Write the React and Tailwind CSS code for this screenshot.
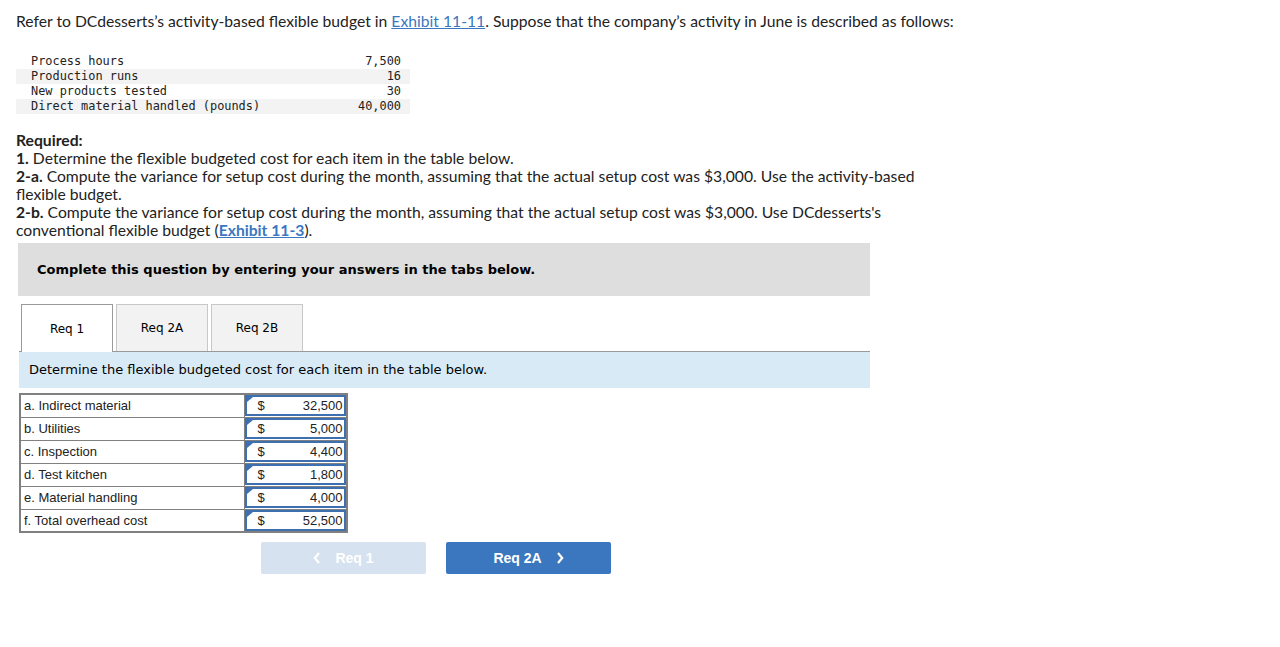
const activity = [
  ["Process hours", "7,500"],
  ["Production runs", "16"],
  ["New products tested", "30"],
  ["Direct material handled (pounds)", "40,000"],
];

const costs = [
  ["a. Indirect material", "32,500"],
  ["b. Utilities", "5,000"],
  ["c. Inspection", "4,400"],
  ["d. Test kitchen", "1,800"],
  ["e. Material handling", "4,000"],
  ["f. Total overhead cost", "52,500"],
];

const sans = "font-['Lato','Open_Sans',sans-serif]";
const verdana = "font-['DejaVu_Sans',Verdana,sans-serif]";
const arial = "font-['Liberation_Sans',Arial,sans-serif]";

export default function App() {
  return (
    <main className={`min-h-screen bg-white px-4 pt-[11px] text-[#222] ${sans}`}>
      <p className="text-[15.7px] leading-[20px]">
        Refer to DCdesserts’s activity-based flexible budget in{" "}
        <a href="#" className="text-[#3a77bf] underline">Exhibit 11-11</a>. Suppose that the company’s activity in June is
        described as follows:
      </p>

      <table className="mt-[23px] w-[394px] font-['DejaVu_Sans_Mono',monospace] text-[11.9px] leading-[15px] text-[#222]">
        <tbody>
          {activity.map(([label, value], i) => (
            <tr key={label} className={i % 2 === 1 ? "bg-[#f3f3f3]" : ""}>
              <td className="pl-[15px]">{label}</td>
              <td className="pr-[9px] text-right">{value}</td>
            </tr>
          ))}
        </tbody>
      </table>

      <div className="mt-[17px] text-[15.7px] leading-[18px]">
        <p className="font-bold">Required:</p>
        <p>
          <b>1.</b> Determine the flexible budgeted cost for each item in the table below.
        </p>
        <p className="w-[930px]">
          <b>2-a.</b> Compute the variance for setup cost during the month, assuming that the actual setup cost was
          $3,000. Use the activity-based flexible budget.
        </p>
        <p className="w-[900px]">
          <b>2-b.</b> Compute the variance for setup cost during the month, assuming that the actual setup cost was
          $3,000. Use DCdesserts's conventional flexible budget (
          <a href="#" className="font-bold text-[#3a77bf] underline">Exhibit 11-3</a>).
        </p>
      </div>

      <div className={`ml-[2px] mt-[4px] flex h-[53px] w-[852px] items-center bg-[#dedede] pl-[19px] text-[13px] font-bold text-black ${verdana}`}>
        Complete this question by entering your answers in the tabs below.
      </div>

      <div className={`ml-[3px] mt-[8px] w-[851px] ${verdana}`}>
        <div className="flex gap-[3px] pl-[2px]">
          <div className="relative z-10 -mb-px flex h-[48px] w-[92px] items-center justify-center border border-b-0 border-[#9a9a9a] bg-white text-[12px] text-black">
            Req 1
          </div>
          <div className="flex h-[47px] w-[92px] items-center justify-center border border-b-0 border-[#c8c8c8] bg-[#f2f2f2] text-[12px] text-black">
            Req 2A
          </div>
          <div className="flex h-[47px] w-[92px] items-center justify-center border border-b-0 border-[#c8c8c8] bg-[#f2f2f2] text-[12px] text-black">
            Req 2B
          </div>
        </div>
        <div className="flex h-[37px] items-center border-t border-[#9a9a9a] bg-[#d9eaf7] pl-[10px] text-[13px] text-black">
          Determine the flexible budgeted cost for each item in the table below.
        </div>

        <table className={`mt-[5px] border-collapse border-2 border-[#808080] text-[13px] text-[#222] ${arial}`}>
          <tbody>
            {costs.map(([label, value]) => (
              <tr key={label} className="h-[23px]">
                <td className="w-[224px] border border-[#808080] pl-[3px]">{label}</td>
                <td className="border border-[#808080] p-0">
                  <div className="relative flex h-[21px] w-[101px] items-center border-2 border-[#3e6fb0] pr-[1px]">
                    <span className="absolute left-0 top-0 h-0 w-0 border-l-[6px] border-b-[5px] border-l-[#3e6fb0] border-b-transparent" />
                    <span className="pl-[11px]">$</span>
                    <span className="ml-auto">{value}</span>
                  </div>
                </td>
              </tr>
            ))}
          </tbody>
        </table>

        <div className={`ml-[242px] mt-[9px] flex gap-[20px] text-[14px] font-bold ${arial}`}>
          <button type="button" className="flex h-[32px] w-[165px] items-center justify-center gap-[14px] rounded-[2px] bg-[#d6e2f0] text-white">
            <svg width="8" height="12" viewBox="0 0 8 12" fill="none" stroke="currentColor" strokeWidth="2.2">
              <path d="M6 1 L1.8 6 L6 11" />
            </svg>
            Req 1
          </button>
          <button type="button" className="flex h-[32px] w-[165px] items-center justify-center gap-[14px] rounded-[2px] bg-[#3a77bf] text-white">
            Req 2A
            <svg width="8" height="12" viewBox="0 0 8 12" fill="none" stroke="currentColor" strokeWidth="2.2">
              <path d="M2 1 L6.2 6 L2 11" />
            </svg>
          </button>
        </div>
      </div>
    </main>
  );
}
